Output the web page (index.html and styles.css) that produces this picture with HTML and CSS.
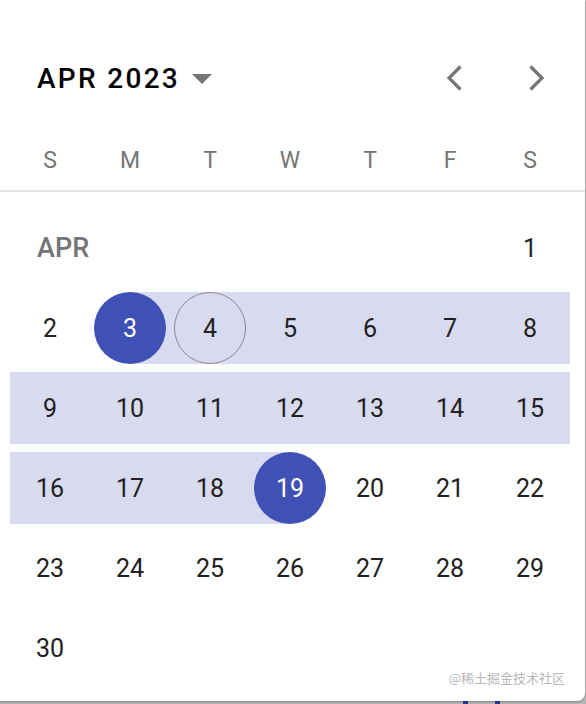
FILE: index.html
```html
<!DOCTYPE html>
<html lang="en">
<head>
<meta charset="utf-8">
<link rel="stylesheet" href="styles.css">
</head>
<body>
<div class="card">
  <div class="top">
    <div class="title">APR 2023</div>
    <svg class="caret" width="20" height="10" viewBox="0 0 20 10"><path d="M0 0 L20 0 L10 10 Z" fill="#757575"/></svg>
    <div class="nav">
      <svg class="chev" width="16" height="26" viewBox="0 0 16 26"><path d="M14.5 1.5 L3 13 L14.5 24.5" fill="none" stroke="#757575" stroke-width="3.2"/></svg>
      <svg class="chev" width="16" height="26" viewBox="0 0 16 26"><path d="M1.5 1.5 L13 13 L1.5 24.5" fill="none" stroke="#757575" stroke-width="3.2"/></svg>
    </div>
  </div>
  <div class="weekdays">
    <span>S</span><span>M</span><span>T</span><span>W</span><span>T</span><span>F</span><span>S</span>
  </div>
  <div class="grid">
    <div class="month">APR</div>
    <div class="cell"><span class="day">1</span></div>

    <div class="cell"><span class="day">2</span></div>
    <div class="cell start"><span class="day sel">3</span></div>
    <div class="cell in"><span class="day today">4</span></div>
    <div class="cell in"><span class="day">5</span></div>
    <div class="cell in"><span class="day">6</span></div>
    <div class="cell in"><span class="day">7</span></div>
    <div class="cell in"><span class="day">8</span></div>

    <div class="cell in"><span class="day">9</span></div>
    <div class="cell in"><span class="day">10</span></div>
    <div class="cell in"><span class="day">11</span></div>
    <div class="cell in"><span class="day">12</span></div>
    <div class="cell in"><span class="day">13</span></div>
    <div class="cell in"><span class="day">14</span></div>
    <div class="cell in"><span class="day">15</span></div>

    <div class="cell in"><span class="day">16</span></div>
    <div class="cell in"><span class="day">17</span></div>
    <div class="cell in"><span class="day">18</span></div>
    <div class="cell end"><span class="day sel">19</span></div>
    <div class="cell"><span class="day">20</span></div>
    <div class="cell"><span class="day">21</span></div>
    <div class="cell"><span class="day">22</span></div>

    <div class="cell"><span class="day">23</span></div>
    <div class="cell"><span class="day">24</span></div>
    <div class="cell"><span class="day">25</span></div>
    <div class="cell"><span class="day">26</span></div>
    <div class="cell"><span class="day">27</span></div>
    <div class="cell"><span class="day">28</span></div>
    <div class="cell"><span class="day">29</span></div>

    <div class="cell"><span class="day">30</span></div>
  </div>
  <div class="watermark">@稀土掘金技术社区</div>
</div>
<div class="mark m1"></div>
<div class="mark m2"></div>
</body>
</html>
```
FILE: styles.css
```css
html, body {
  margin: 0;
  padding: 0;
}
body {
  background: #b4b4b4;
  width: 586px;
  height: 704px;
  overflow: hidden;
  position: relative;
  font-family: Roboto, "Noto Sans CJK SC", sans-serif;
}
.card {
  position: relative;
  width: 585px;
  height: 701px;
  background: #fff;
  border-bottom-right-radius: 8px;
  box-shadow: 0 1px 2px rgba(0,0,0,0.25);
  z-index: 1;
}
.top {
  display: flex;
  align-items: center;
  height: 52px;
  padding-top: 52px;
  padding-left: 37px;
}
.title {
  font-size: 28px;
  font-weight: 500;
  letter-spacing: 2.3px;
  color: #000;
}
.caret {
  margin-left: 12px;
  margin-top: 1px;
}
.nav {
  margin-left: auto;
  display: flex;
  gap: 67px;
  margin-right: 40px;
}
.weekdays {
  margin-top: 27px;
  height: 59px;
  display: grid;
  grid-template-columns: repeat(7, 80px);
  padding-left: 10px;
  align-items: center;
  border-bottom: 2px solid #e2e2e2;
  color: #757575;
  font-size: 23px;
}
.weekdays span {
  text-align: center;
}
.grid {
  display: grid;
  grid-template-columns: repeat(7, 80px);
  grid-auto-rows: 80px;
  padding-left: 10px;
  padding-top: 16px;
}
.month {
  grid-column: span 6;
  display: flex;
  align-items: center;
  padding-left: 27px;
  font-size: 27px;
  font-weight: 500;
  color: #757575;
}
.cell {
  display: flex;
  align-items: center;
  justify-content: center;
  background-repeat: no-repeat;
  background-position: center;
  background-size: 100% 72px;
}
.cell.in {
  background-image: linear-gradient(#d8dbef, #d8dbef);
}
.cell.start {
  background-image: linear-gradient(to right, transparent 50%, #d8dbef 50%);
}
.cell.end {
  background-image: linear-gradient(to right, #d8dbef 50%, transparent 50%);
}
.day {
  width: 72px;
  height: 72px;
  box-sizing: border-box;
  border-radius: 50%;
  display: flex;
  align-items: center;
  justify-content: center;
  font-size: 25px;
  color: #212121;
}
.day.sel {
  background: #3f51b5;
  color: #fff;
}
.day.today {
  border: 1.5px solid #8a8a8e;
}
.watermark {
  position: absolute;
  right: 20px;
  bottom: 14px;
  font-size: 13px;
  color: #b8b8b8;
  font-family: "Noto Sans CJK SC", sans-serif;
}
.mark {
  position: absolute;
  bottom: 0;
  width: 5px;
  height: 3px;
  background: #2a3590;
}
.m1 { left: 463px; }
.m2 { left: 495px; }
```
